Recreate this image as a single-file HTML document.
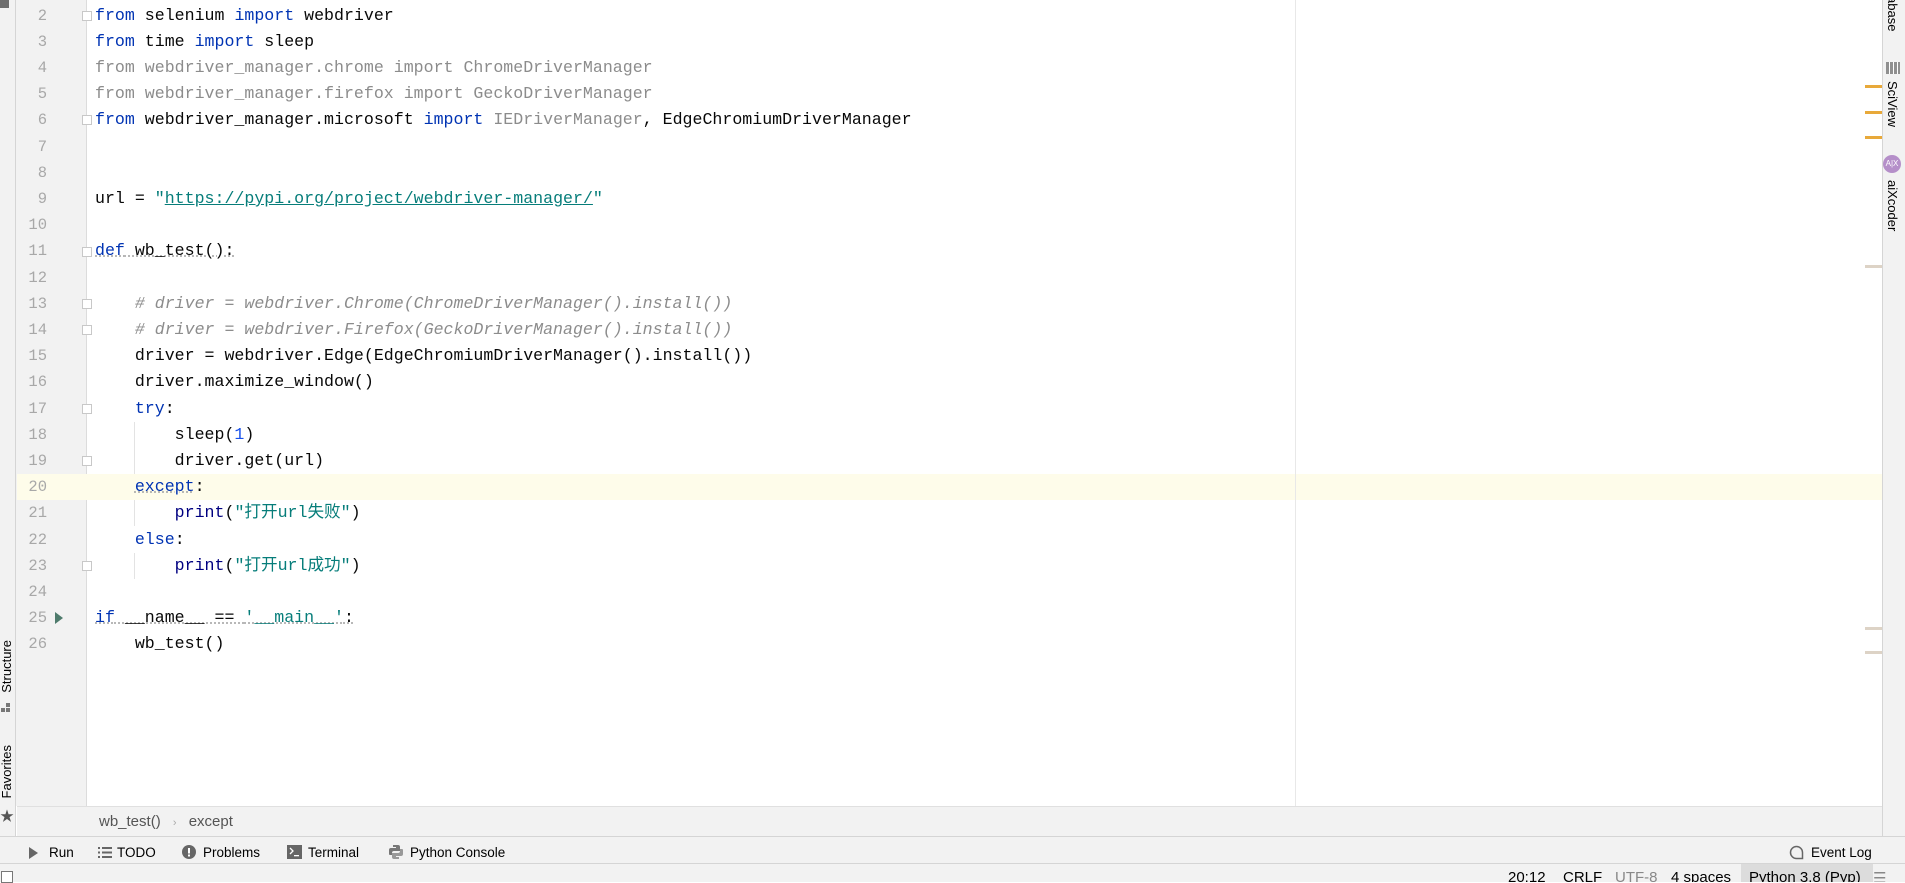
<!DOCTYPE html>
<html><head><meta charset="utf-8"><style>
*{margin:0;padding:0;box-sizing:border-box}
body{width:1905px;height:882px;overflow:hidden;background:#fff;position:relative;font-family:"Liberation Sans","Noto Sans CJK SC",sans-serif}
.abs{position:absolute}
#lstrip{left:0;top:0;width:16px;height:864px;background:#f2f2f2;border-right:1px solid #d5d5d5}
#gutter{left:16px;top:0;width:71px;height:806px;background:#f2f2f2;border-right:1px solid #dcdcdc}
#rstrip{left:1882px;top:0;width:23px;height:864px;background:#f2f2f2;border-left:1px solid #d5d5d5}
.ln{position:absolute;left:16px;width:31px;text-align:right;font-family:"Liberation Mono",monospace;font-size:15.5px;color:#a8a8a8;height:26px;line-height:26px}
.cl{position:absolute;left:95px;white-space:pre;font-family:"Liberation Mono","Noto Sans CJK SC",monospace;font-size:16.6px;color:#080808;height:26px;line-height:26px}
.k{color:#0033b3}.c{color:#8c8c8c;font-style:italic}.g{color:#8c8c8c}.s{color:#067d7a}.n{color:#1750eb}.b{color:#000080}
.u{text-decoration:underline}
.w{text-decoration:underline dotted #aaa}
.fold{position:absolute;left:82px;width:10px;height:10px;border:1px solid #c8c8c8;background:#fff}
.guide{position:absolute;left:134px;width:1px;background:#e3e3e3}
.vt{position:absolute;writing-mode:vertical-rl;font-size:13px;color:#000}
.mark{position:absolute;left:1865px;width:17px;height:3px;background:#e8a93a}
.tb{position:absolute;top:845px;font-size:13.5px;color:#000}
</style></head><body>
<div class="abs" style="left:17px;top:474px;width:1865px;height:26px;background:#fefcea"></div>
<div id="lstrip" class="abs"></div>
<div id="gutter" class="abs"></div>
<div class="abs" style="left:17px;top:474px;width:70px;height:26px;background:#fefcea"></div>
<div class="abs" style="left:1295px;top:0;width:1px;height:806px;background:#e8e8e8"></div>
<div id="rstrip" class="abs"></div>

<div class="abs" style="left:0;top:0;width:9px;height:8px;background:#6e6e6e"></div>
<div class="vt" style="left:-1px;top:640px;transform:rotate(180deg)">Structure</div>
<div class="abs" style="left:1px;top:708px;width:4px;height:4px;background:#777"></div>
<div class="abs" style="left:6px;top:708px;width:4px;height:4px;background:#777"></div>
<div class="abs" style="left:6px;top:703px;width:4px;height:4px;background:#777"></div>
<div class="vt" style="left:-1px;top:745px;transform:rotate(180deg)">Favorites</div>
<div class="abs" style="left:0;top:806px;font-size:14px;color:#555">★</div>

<div class="vt" style="left:1885px;top:-4px">abase</div>
<div class="abs" style="left:1886px;top:62px;width:14px;height:12px;background:repeating-linear-gradient(90deg,#777 0 3px,transparent 3px 4px),#fff;opacity:.8"></div>
<div class="vt" style="left:1885px;top:81px">SciView</div>
<div class="abs" style="left:1883px;top:155px;width:18px;height:18px;border-radius:50%;background:#b58fc9;color:#fff;font-size:8px;line-height:18px;text-align:center">A|X</div>
<div class="vt" style="left:1885px;top:180px">aiXcoder</div>
<div class="mark" style="top:85px"></div>
<div class="mark" style="top:111px"></div>
<div class="mark" style="top:136px"></div>
<div class="mark" style="top:265px;background:#ddd3c6"></div>
<div class="mark" style="top:627px;background:#ddd3c6"></div>
<div class="mark" style="top:651px;background:#ddd3c6"></div>

<div class="ln" style="top:3px">2</div>
<div class="ln" style="top:29px">3</div>
<div class="ln" style="top:55px">4</div>
<div class="ln" style="top:81px">5</div>
<div class="ln" style="top:107px">6</div>
<div class="ln" style="top:134px">7</div>
<div class="ln" style="top:160px">8</div>
<div class="ln" style="top:186px">9</div>
<div class="ln" style="top:212px">10</div>
<div class="ln" style="top:238px">11</div>
<div class="ln" style="top:265px">12</div>
<div class="ln" style="top:291px">13</div>
<div class="ln" style="top:317px">14</div>
<div class="ln" style="top:343px">15</div>
<div class="ln" style="top:369px">16</div>
<div class="ln" style="top:396px">17</div>
<div class="ln" style="top:422px">18</div>
<div class="ln" style="top:448px">19</div>
<div class="ln" style="top:474px">20</div>
<div class="ln" style="top:500px">21</div>
<div class="ln" style="top:527px">22</div>
<div class="ln" style="top:553px">23</div>
<div class="ln" style="top:579px">24</div>
<div class="ln" style="top:605px">25</div>
<div class="ln" style="top:631px">26</div>
<svg class="abs" style="left:55px;top:612px" width="9" height="12"><path d="M0 0L8 6L0 12Z" fill="#4e7b6c"/></svg>

<div class="fold" style="top:11px"></div>
<div class="fold" style="top:115px"></div>
<div class="fold" style="top:247px"></div>
<div class="fold" style="top:299px"></div>
<div class="fold" style="top:325px"></div>
<div class="fold" style="top:404px"></div>
<div class="fold" style="top:456px"></div>
<div class="fold" style="top:561px"></div>

<div class="guide" style="top:422px;height:52px"></div>
<div class="guide" style="top:500px;height:26px"></div>
<div class="guide" style="top:553px;height:26px"></div>

<div class="cl" style="top:3px"><span class="k">from</span> selenium <span class="k">import</span> webdriver</div>
<div class="cl" style="top:29px"><span class="k">from</span> time <span class="k">import</span> sleep</div>
<div class="cl g" style="top:55px">from webdriver_manager.chrome import ChromeDriverManager</div>
<div class="cl g" style="top:81px">from webdriver_manager.firefox import GeckoDriverManager</div>
<div class="cl" style="top:107px"><span class="k">from</span> webdriver_manager.microsoft <span class="k">import</span> <span class="g">IEDriverManager</span>, EdgeChromiumDriverManager</div>
<div class="cl" style="top:186px">url = <span class="s">"<span class="u">https://pypi.org/project/webdriver-manager/</span>"</span></div>
<div class="cl" style="top:238px"><span class="w"><span class="k">def</span> wb_test():</span></div>
<div class="cl c" style="top:291px">    # driver = webdriver.Chrome(ChromeDriverManager().install())</div>
<div class="cl c" style="top:317px">    # driver = webdriver.Firefox(GeckoDriverManager().install())</div>
<div class="cl" style="top:343px">    driver = webdriver.Edge(EdgeChromiumDriverManager().install())</div>
<div class="cl" style="top:369px">    driver.maximize_window()</div>
<div class="cl" style="top:396px">    <span class="k">try</span>:</div>
<div class="cl" style="top:422px">        sleep(<span class="n">1</span>)</div>
<div class="cl" style="top:448px">        driver.get(url)</div>
<div class="cl" style="top:474px">    <span class="k w">except</span>:</div>
<div class="cl" style="top:500px">        <span class="b">print</span>(<span class="s">"打开url失败"</span>)</div>
<div class="cl" style="top:527px">    <span class="k">else</span>:</div>
<div class="cl" style="top:553px">        <span class="b">print</span>(<span class="s">"打开url成功"</span>)</div>
<div class="cl" style="top:605px"><span class="w"><span class="k">if</span> __name__ == <span class="s">'__main__'</span>:</span></div>
<div class="cl" style="top:631px">    wb_test()</div>

<div class="abs" style="left:17px;top:806px;width:1865px;height:30px;background:#f2f2f2;border-top:1px solid #e0e0e0"></div>
<div class="abs" style="left:99px;top:813px;font-size:15px;color:#555">wb_test() <span style="color:#aaa;font-size:11px;margin:0 8px">›</span> except</div>

<div class="abs" style="left:0;top:836px;width:1905px;height:28px;background:#f2f2f2;border-top:1px solid #d5d5d5;border-bottom:1px solid #d5d5d5"></div>
<svg class="abs" style="left:29px;top:847px" width="10" height="12"><path d="M0 0L9 6L0 12Z" fill="#666"/></svg>
<div class="tb" style="left:49px">Run</div>
<svg class="abs" style="left:98px;top:847px" width="14" height="11"><g fill="#666"><rect x="0" y="0" width="2" height="2"/><rect x="4" y="0" width="10" height="2"/><rect x="0" y="4.5" width="2" height="2"/><rect x="4" y="4.5" width="10" height="2"/><rect x="0" y="9" width="2" height="2"/><rect x="4" y="9" width="10" height="2"/></g></svg>
<div class="tb" style="left:117px">TODO</div>
<svg class="abs" style="left:182px;top:845px" width="14" height="14"><circle cx="7" cy="7" r="7" fill="#666"/><rect x="6" y="3" width="2" height="5.5" fill="#fff"/><rect x="6" y="9.5" width="2" height="2" fill="#fff"/></svg>
<div class="tb" style="left:203px">Problems</div>
<svg class="abs" style="left:287px;top:845px" width="15" height="14"><rect width="15" height="14" fill="#666"/><path d="M3 3L6 6L3 9" stroke="#fff" fill="none" stroke-width="1.3"/><rect x="7" y="10" width="5" height="1.3" fill="#fff"/></svg>
<div class="tb" style="left:308px">Terminal</div>
<svg class="abs" style="left:389px;top:845px" width="14" height="14"><path d="M4 0h5a2 2 0 0 1 2 2v4H5a2 2 0 0 0-2 2v2H1a1 1 0 0 1-1-1V5a2 2 0 0 1 2-2h5V2H4z" fill="#777"/><path d="M10 14H5a2 2 0 0 1-2-2V8h6a2 2 0 0 0 2-2V4h2a1 1 0 0 1 1 1v4a2 2 0 0 1-2 2H7v1h3z" fill="#999"/></svg>
<div class="tb" style="left:410px">Python Console</div>
<svg class="abs" style="left:1789px;top:845px" width="15" height="15"><path d="M13.5 13.5H7.5A6 6 0 1 1 13.5 7.5Z" fill="none" stroke="#666" stroke-width="1.5"/></svg>
<div class="tb" style="left:1811px">Event Log</div>

<div class="abs" style="left:0;top:864px;width:1905px;height:18px;background:#f2f2f2"></div>
<div class="abs" style="left:1px;top:871px;width:12px;height:12px;border:1px solid #777;background:#fff"></div>
<div class="abs" style="left:1741px;top:864px;width:132px;height:18px;background:#dcdcdc"></div>
<div class="abs" style="left:0;top:869px;font-size:15px;color:#000;white-space:pre;width:1905px;height:13px;overflow:hidden">
<span class="abs" style="left:1508px;top:0">20:12</span><span class="abs" style="left:1563px;top:0">CRLF</span><span class="abs" style="left:1615px;top:0;color:#888">UTF-8</span><span class="abs" style="left:1671px;top:0">4 spaces</span><span class="abs" style="left:1749px;top:0">Python 3.8 (Pyp)</span><span class="abs" style="left:1873px;top:0;color:#888">☰</span></div>
</body></html>
